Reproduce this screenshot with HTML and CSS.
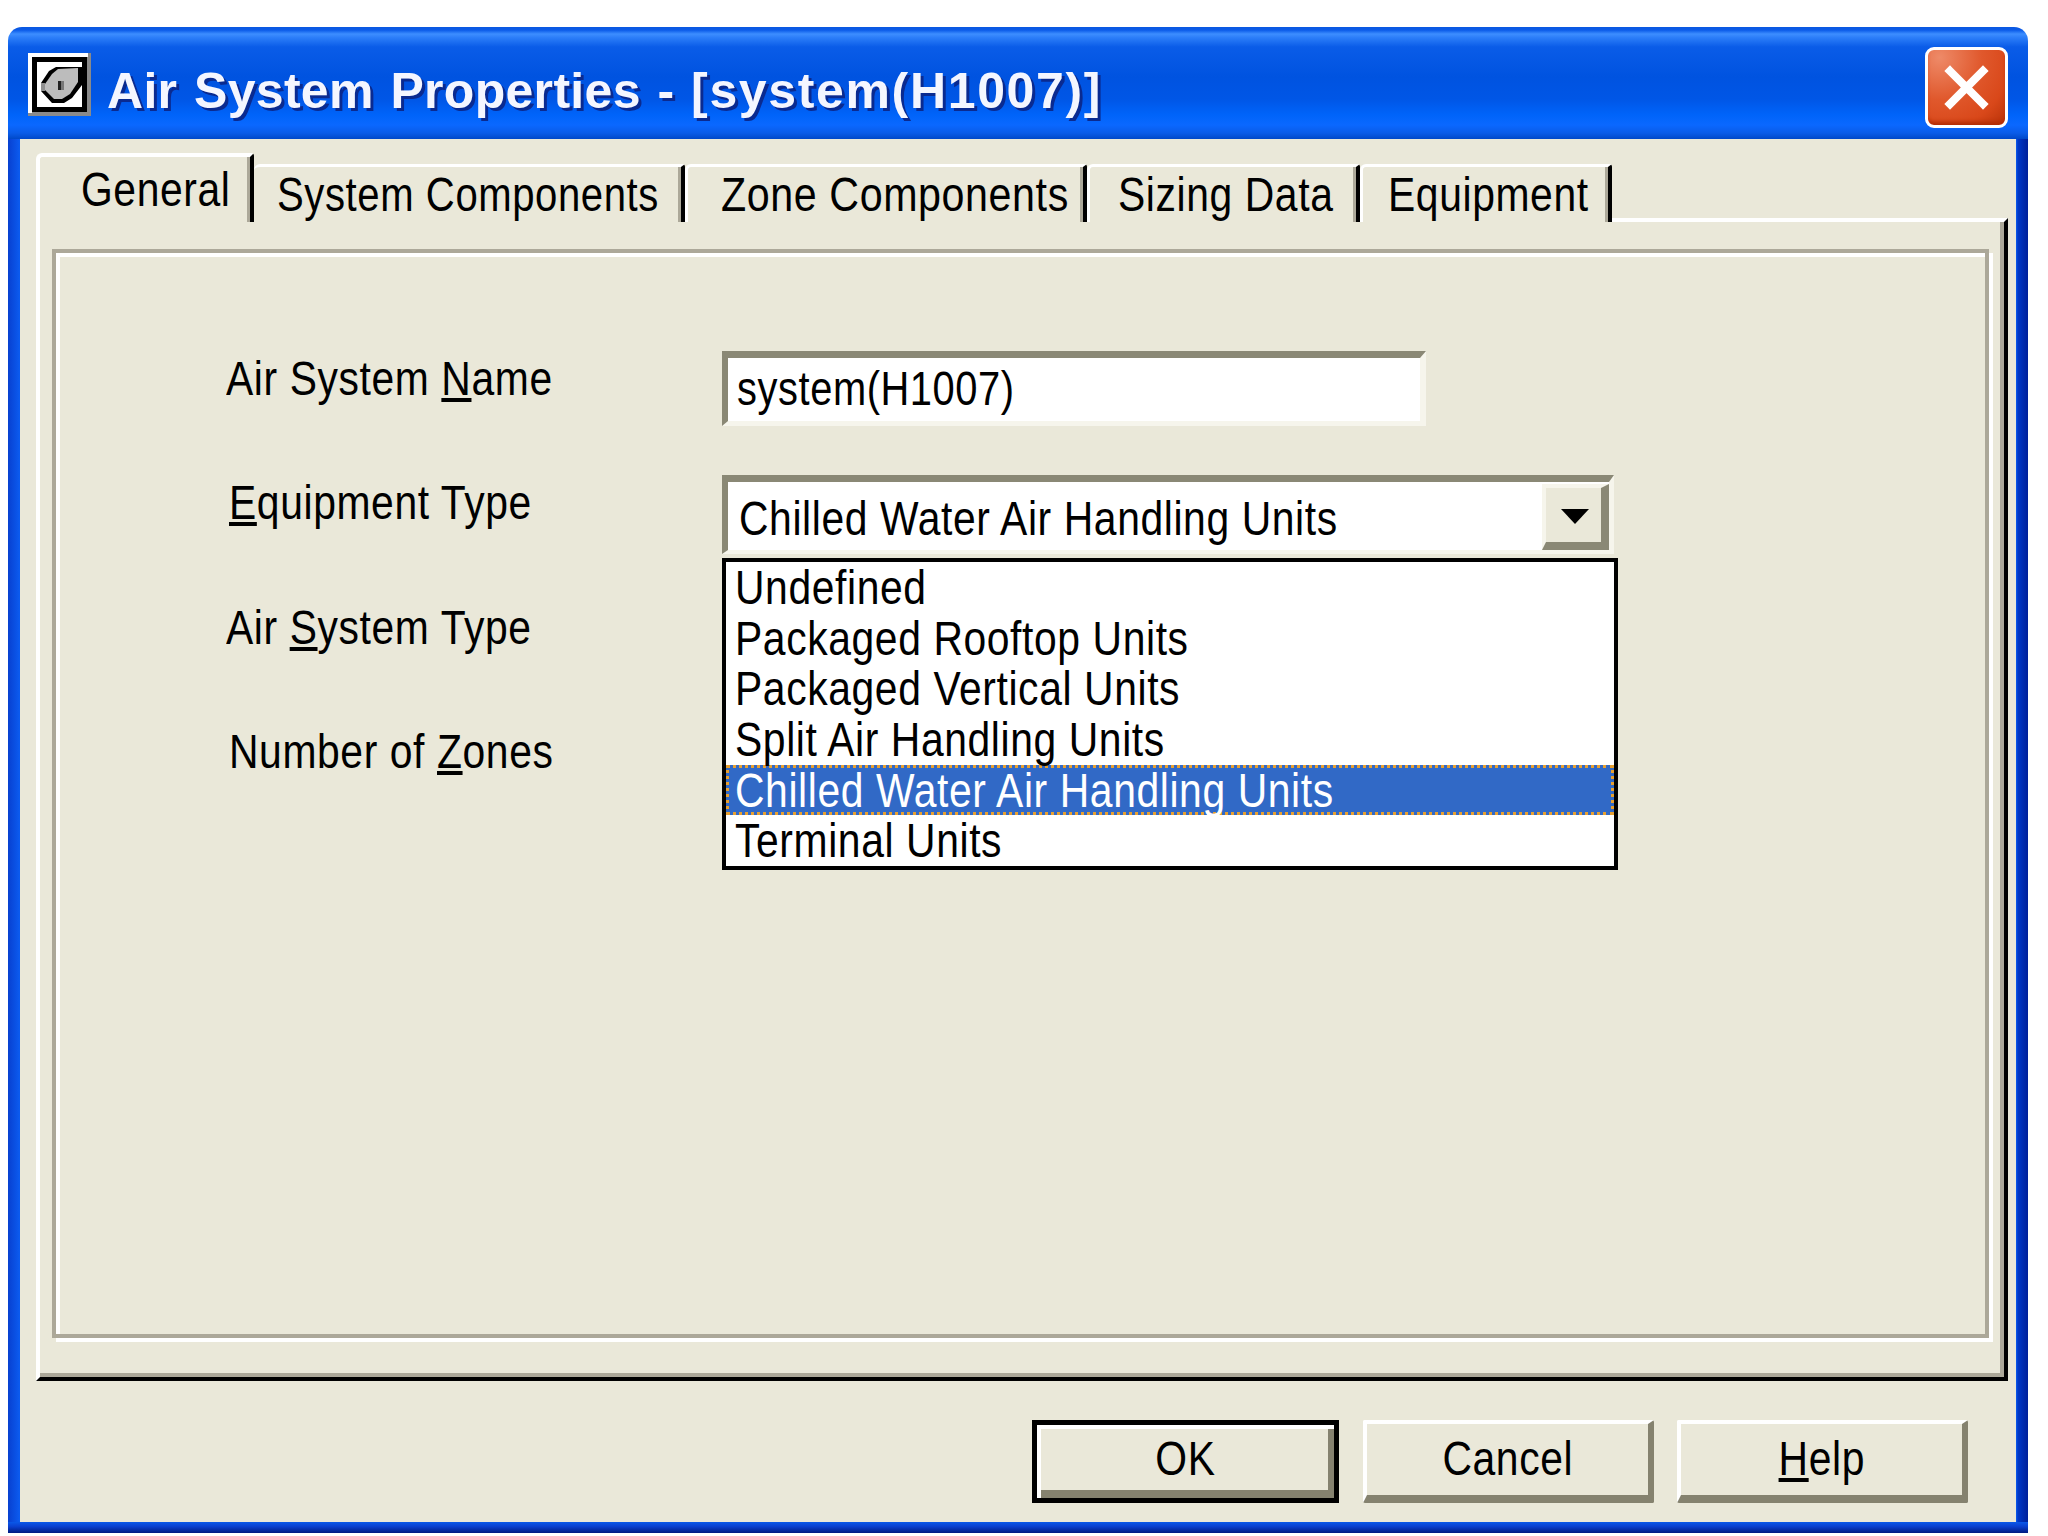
FILE: index.html
```html
<!DOCTYPE html>
<html lang="en">
<head>
<meta charset="utf-8">
<title>Air System Properties</title>
<link rel="stylesheet" href="styles.css">
</head>
<body>
<div class="window">
  <header class="titlebar">
    <svg class="app-icon" viewBox="0 0 63 63" aria-hidden="true">
      <rect width="63" height="63" fill="#8a8a8a"/>
      <path d="M0 0H60V4H4V60H0Z" fill="#fff"/>
      <rect x="6.5" y="6.5" width="50" height="50" fill="#fff" stroke="#000" stroke-width="5"/>
      <path d="M56 10V14H28L21 18L13 30V38L24 50H36L44 45L54 32H56Z" fill="#000"/>
      <path d="M50 15V29L42 41L34 46H26L17 37V31L24 21L30 16Z" fill="#bcbcbc"/>
      <rect x="13" y="30" width="4" height="8" fill="#8f8f8f"/>
      <rect x="30" y="28" width="3" height="9" fill="#222"/>
      <rect x="33" y="28" width="3" height="9" fill="#777"/>
    </svg>
    <h1 class="title">Air System Properties - <span class="title-doc">[system(H1007)]</span></h1>
    <button class="close" aria-label="Close">
      <svg viewBox="0 0 77 75" aria-hidden="true"><path d="M22 21L55 54M55 21L22 54" stroke="#fff" stroke-width="8" stroke-linecap="square" fill="none"/></svg>
    </button>
  </header>
  <div class="frame">
    <div class="client">
      <nav class="tabs">
        <div class="tab selected tab-general"><span class="sq">General</span></div>
        <div class="tab tab-system"><span class="sq">System Components</span></div>
        <div class="tab tab-zone"><span class="sq">Zone Components</span></div>
        <div class="tab tab-sizing"><span class="sq">Sizing Data</span></div>
        <div class="tab tab-equip"><span class="sq">Equipment</span></div>
      </nav>
      <section class="panel">
        <div class="group">
          <div class="labels">
            <label><span class="sq">Air System <u>N</u>ame</span></label>
            <label class="shift"><span class="sq"><u>E</u>quipment Type</span></label>
            <label><span class="sq">Air <u>S</u>ystem Type</span></label>
            <label class="shift"><span class="sq">Number of <u>Z</u>ones</span></label>
          </div>
          <div class="controls">
            <div class="field input"><span class="sq">system(H1007)</span></div>
            <div class="field combo">
              <span class="combo-value"><span class="sq">Chilled Water Air Handling Units</span></span>
              <span class="drop"><i class="arrow"></i></span>
              <ul class="list">
                <li><span class="sq">Undefined</span></li>
                <li><span class="sq">Packaged Rooftop Units</span></li>
                <li><span class="sq">Packaged Vertical Units</span></li>
                <li><span class="sq">Split Air Handling Units</span></li>
                <li class="current"><span class="sq">Chilled Water Air Handling Units</span></li>
                <li><span class="sq">Terminal Units</span></li>
              </ul>
            </div>
          </div>
        </div>
      </section>
      <footer class="actions">
        <button class="btn default"><span class="sq mid">OK</span></button>
        <button class="btn"><span class="sq mid">Cancel</span></button>
        <button class="btn"><span class="sq mid"><u>H</u>elp</span></button>
      </footer>
    </div>
    <div class="frame-bottom"></div>
  </div>
</div>
</body>
</html>
```
FILE: styles.css
```css
* { box-sizing: border-box; }
html, body { margin: 0; height: 100%; }
body {
  background: #fff;
  padding: 27px 20px 0 8px;
  font-family: "Liberation Sans", Arial, sans-serif;
  font-size: 48px;
  letter-spacing: .7px;
  color: #000;
  overflow: hidden;
}
.sq {
  display: inline-block;
  white-space: nowrap;
  transform: scaleX(.851);
  transform-origin: left center;
}
.sq.mid { transform-origin: center; }
.window {
  width: 2020px;
  height: 1506px;
  display: flex;
  flex-direction: column;
  border-radius: 14px 14px 0 0;
  overflow: hidden;
}
.titlebar {
  height: 112px;
  flex: none;
  display: flex;
  align-items: flex-start;
  padding: 20px 20px 0 20px;
  background: linear-gradient(#0a58e0 0, #0a5ae8 3px, #3d8eff 7px, #2a7cf8 11px, #0a5ce8 20px, #0053e0 50px, #0056e6 72px, #0064fa 88px, #0a68ff 98px, #0a5ce8 106px, #0048c8 112px);
}
.app-icon { width: 63px; height: 63px; flex: none; margin-top: 6px; }
.title {
  flex: 1;
  margin: 0 0 0 16px;
  padding-top: 6px;
  font-family: "Liberation Sans", Arial, sans-serif;
  font-size: 50px;
  line-height: 76px;
  font-weight: 700;
  letter-spacing: .3px;
  word-spacing: 2.5px;
  color: #f4f6ff;
  white-space: nowrap;
  text-shadow: 3px 3px 0 #0a2a90;
}
.title-doc { letter-spacing: 1.65px; }
.close {
  width: 83px;
  height: 81px;
  flex: none;
  padding: 0;
  border: 3px solid #fff;
  border-radius: 9px;
  background: radial-gradient(circle at 15% 10%, #ee8a68 0, #e0582c 45%, #d9481a 75%, #b83208 100%);
  box-shadow: inset 0 -5px 4px -2px #b22c04;
}
.close svg { display: block; width: 100%; height: 100%; }
.frame {
  flex: 1;
  display: flex;
  flex-direction: column;
  background: linear-gradient(90deg, #0840d0 0, #0c5cf0 12px, #0c5cf0 calc(100% - 12px), #0038c8 calc(100% - 10px), #00209a 100%);
}
.client {
  flex: 1;
  margin: 0 12px;
  padding: 14px 8px 0 16px;
  background: #eae8d9;
  display: flex;
  flex-direction: column;
}
.frame-bottom {
  height: 11px;
  flex: none;
  background: linear-gradient(#0a58e8 0, #0a40d0 40%, #001a80 100%);
}
.tabs {
  display: grid;
  grid-template-columns: 218px 431px 402px 273px 252px;
  height: 69px;
  margin-bottom: -4px;
  position: relative;
  z-index: 1;
  align-items: end;
}
.tab {
  height: 58px;
  background: #eae8d9;
  border-top: 3px solid #fff;
  border-right: 4px solid #000;
  box-shadow: inset -3px 0 0 #aca899;
  display: flex;
  align-items: center;
  white-space: nowrap;
  border-top-left-radius: 6px;
  border-top-right-radius: 3px;
}
.tab.selected {
  height: 69px;
  border-left: 4px solid #fff;
  border-top-width: 4px;
}
.tab-general { padding-left: 41px; }
.tab-system { padding-left: 23px; }
.tab-system .sq { transform: scaleX(.835); }
.tab-zone { padding-left: 33px; border-left: 3px solid #fff; }
.tab-zone .sq { transform: scaleX(.858); }
.tab-sizing { padding-left: 28px; border-left: 3px solid #fff; }
.tab-equip { padding-left: 25px; border-left: 3px solid #fff; }
.panel {
  height: 1163px;
  flex: none;
  width: 1972px;
  padding: 27px 15px 39px 12px;
  border-style: solid;
  border-width: 4px;
  border-color: #fff #000 #000 #fff;
  box-shadow: inset -4px -4px 0 #aca899;
}
.group {
  height: 100%;
  border: 4px solid #aca899;
  box-shadow: inset 4px 4px 0 #fff, 4px 4px 0 #fff;
  padding: 99px 0 0 170px;
  display: flex;
}
.labels { width: 496px; flex: none; display: flex; flex-direction: column; }
.labels label { height: 124.4px; line-height: 54px; white-space: nowrap; }
.labels .shift { padding-left: 3px; }
.controls { flex: 1; display: flex; flex-direction: column; }
.field { position: relative; white-space: nowrap; }
.input {
  width: 704px;
  height: 75px;
  margin-top: -1px;
  padding: 4px 0 0 9px;
  background: #fff;
  border-style: solid;
  border-width: 7px 6px 5px 6px;
  border-color: #8a8875 #f6f5ec #f6f5ec #8a8875;
  line-height: 54px;
}
.input .sq { transform: scaleX(.83); }
.combo {
  width: 892px;
  height: 79px;
  margin-top: 49px;
  background: #fff;
  border-style: solid;
  border-width: 7px 5px 4px 6px;
  border-color: #8a8875 #f6f5ec #f6f5ec #8a8875;
  display: flex;
}
.combo-value { flex: 1; padding: 10px 0 0 11px; line-height: 54px; }
.drop {
  width: 67px;
  height: 66px;
  margin-top: 2px;
  padding: 3px 0 0 3px;
  background: #eae8d9;
  border-style: solid;
  border-width: 4px 8px 8px 4px;
  border-color: #f6f5ec #8a8875 #8a8875 #f6f5ec;
  display: flex;
  align-items: center;
  justify-content: center;
}
.arrow {
  width: 0;
  height: 0;
  border-left: 14px solid transparent;
  border-right: 14px solid transparent;
  border-top: 15px solid #000;
}
.list {
  position: absolute;
  left: -6px;
  top: 76px;
  width: 896px;
  height: 312px;
  margin: 0;
  padding: 0;
  list-style: none;
  background: #fff;
  border: 4px solid #000;
  z-index: 2;
}
.list li {
  height: 50.67px;
  padding-left: 9px;
  line-height: 51px;
}
.list .current {
  background: #3169c6;
  color: #fff;
  outline: 3px dotted #e8a030;
  outline-offset: -3px;
}
.actions {
  display: flex;
  padding: 39px 0 0 996px;
}
.btn {
  width: 291px;
  height: 83px;
  margin-right: 23px;
  padding: 0 0 3px;
  font: inherit;
  letter-spacing: inherit;
  color: #000;
  background: #eae8d9;
  border-style: solid;
  border-width: 4px 6px 8px 4px;
  border-color: #fff #85826f #85826f #fff;
  border-radius: 2px;
}
.btn.default {
  width: 307px;
  margin-right: 24px;
  padding: 0 0 6px;
  border: 5px solid #000;
  box-shadow: inset 4px 4px 0 #fff, inset -6px -8px 0 #85826f;
  border-radius: 0;
}
```
